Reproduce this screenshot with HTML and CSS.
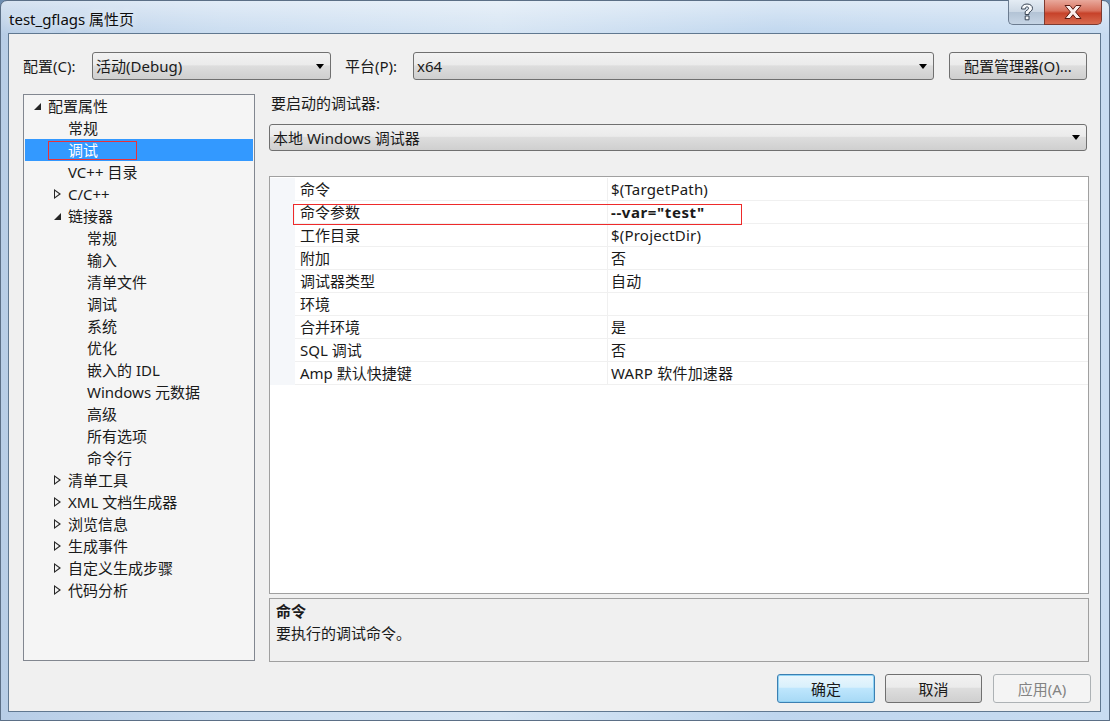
FILE: index.html
```html
<!DOCTYPE html>
<html lang="zh-CN">
<head>
<meta charset="utf-8">
<title>test_gflags 属性页</title>
<link rel="stylesheet" href="styles.css">
</head>
<body>
<div class="window">
	<div class="titlebar">
		<div class="title">test_gflags 属性页</div>
		<div class="caption">
			<div class="cap help">
				<svg width="14" height="18" viewBox="0 0 14 18"><path d="M1.5 6 C1.5 2.6 3.8 1 7 1 C10.4 1 12.5 2.8 12.5 5.3 C12.5 7.8 10.2 8.6 9 9.8 L9 11.5 L5.2 11.5 L5.2 8.8 C6 7.3 8.6 6.8 8.6 5.3 C8.6 4.4 8 3.9 7 3.9 C5.9 3.9 5.3 4.6 5.3 6 Z M5.2 13 L9 13 L9 16.8 L5.2 16.8 Z" fill="#f7f9fb" stroke="#3a4656" stroke-width="1"/></svg>
			</div>
			<div class="cap close">
				<svg width="22" height="16" viewBox="0 0 22 16"><path d="M3 1.5 L8 1.5 L11 5.3 L14 1.5 L19 1.5 L13.6 8 L19 14.5 L14 14.5 L11 10.7 L8 14.5 L3 14.5 L8.4 8 Z" fill="#fbeeec" stroke="#5a1a12" stroke-width="1"/></svg>
			</div>
		</div>
	</div>

	<div class="client">
		<div class="toprow">
			<label class="lbl lbl-config">配置(C):</label>
			<div class="combo combo-config"><span>活动(Debug)</span><i class="drop"></i></div>
			<label class="lbl lbl-platform">平台(P):</label>
			<div class="combo combo-platform"><span>x64</span><i class="drop"></i></div>
			<div class="btn btn-manager">配置管理器(O)...</div>
		</div>

		<div class="main">
			<div class="tree">
				<div class="node l0"><i class="exp"></i>配置属性</div>
				<div class="node l1"><i></i>常规</div>
				<div class="node l1 sel"><i></i>调试<span class="mark mark-tree"></span></div>
				<div class="node l1"><i></i>VC++ 目录</div>
				<div class="node l1"><i class="col"></i>C/C++</div>
				<div class="node l1"><i class="exp"></i>链接器</div>
				<div class="node l2"><i></i>常规</div>
				<div class="node l2"><i></i>输入</div>
				<div class="node l2"><i></i>清单文件</div>
				<div class="node l2"><i></i>调试</div>
				<div class="node l2"><i></i>系统</div>
				<div class="node l2"><i></i>优化</div>
				<div class="node l2"><i></i>嵌入的 IDL</div>
				<div class="node l2"><i></i>Windows 元数据</div>
				<div class="node l2"><i></i>高级</div>
				<div class="node l2"><i></i>所有选项</div>
				<div class="node l2"><i></i>命令行</div>
				<div class="node l1"><i class="col"></i>清单工具</div>
				<div class="node l1"><i class="col"></i>XML 文档生成器</div>
				<div class="node l1"><i class="col"></i>浏览信息</div>
				<div class="node l1"><i class="col"></i>生成事件</div>
				<div class="node l1"><i class="col"></i>自定义生成步骤</div>
				<div class="node l1"><i class="col"></i>代码分析</div>
			</div>

			<div class="panel">
				<div class="panel-label">要启动的调试器:</div>
				<div class="combo combo-debugger"><span>本地 Windows 调试器</span><i class="drop"></i></div>

				<div class="grid">
					<div class="row"><div class="gut"></div><div class="name">命令</div><div class="val">$(TargetPath)</div></div>
					<div class="row"><div class="gut"></div><div class="name">命令参数</div><div class="val bold">--var="test"</div></div>
					<div class="row"><div class="gut"></div><div class="name">工作目录</div><div class="val">$(ProjectDir)</div></div>
					<div class="row"><div class="gut"></div><div class="name">附加</div><div class="val">否</div></div>
					<div class="row"><div class="gut"></div><div class="name">调试器类型</div><div class="val">自动</div></div>
					<div class="row"><div class="gut"></div><div class="name">环境</div><div class="val"></div></div>
					<div class="row"><div class="gut"></div><div class="name">合并环境</div><div class="val">是</div></div>
					<div class="row"><div class="gut"></div><div class="name">SQL 调试</div><div class="val">否</div></div>
					<div class="row"><div class="gut"></div><div class="name">Amp 默认快捷键</div><div class="val">WARP 软件加速器</div></div>
					<div class="redbox"></div>
				</div>

				<div class="desc">
					<div class="desc-title">命令</div>
					<div class="desc-text">要执行的调试命令。</div>
				</div>
			</div>
		</div>

		<div class="footer">
			<div class="btn btn-default">确定</div>
			<div class="btn">取消</div>
			<div class="btn btn-disabled">应用(A)</div>
		</div>
	</div>
</div>
</body>
</html>
```

FILE: styles.css
```css
body {
	margin: 0;
	padding: 0;
	width: 1110px;
	height: 721px;
	overflow: hidden;
	font: normal 15px "Noto Sans", "Noto Sans CJK SC", sans-serif;
	color: #1a1a1a;
	background: #6d8db0;
}

.window {
	width: 1110px;
	height: 721px;
	box-sizing: border-box;
	border: 1px solid #5b6f86;
	border-radius: 7px 7px 0 0;
	background:
		linear-gradient(to bottom, rgba(255,255,255,.45) 0, rgba(255,255,255,0) 34px),
		linear-gradient(to right, #b7cde6 0, #c9dcf0 20%, #d5e4f3 45%, #bfd6ee 70%, #c8dcf1 100%);
	display: flex;
	flex-direction: column;
}

.titlebar {
	height: 32px;
	display: flex;
	align-items: flex-start;
}

.title {
	padding: 8px 0 0 8px;
	font-size: 15px;
	line-height: 20px;
	color: #0d0d0d;
	text-shadow: 0 0 8px rgba(255,255,255,.9);
}

.caption {
	margin-left: auto;
	margin-right: 7px;
	margin-top: -1px;
	display: flex;
}

.cap {
	height: 25px;
	display: flex;
	align-items: center;
	justify-content: center;
	box-sizing: border-box;
	border: 1px solid #6c7c90;
	border-top: none;
}

.help {
	width: 36px;
	border-radius: 0 0 0 5px;
	border-right: none;
	background: linear-gradient(to bottom, #e4ecf4 0, #cbd7e4 50%, #b3c3d5 51%, #c6d5e5 100%);
}

.close {
	width: 58px;
	border-radius: 0 0 5px 0;
	background: linear-gradient(to bottom, #e9a99c 0, #d7705c 45%, #c7422a 55%, #d86b4f 100%);
	border-color: #7d3a30;
}

.client {
	margin: 0 8px 8px 7px;
	flex: 1;
	background: #f0f0f0;
	border: 1px solid #607890;
	display: flex;
	flex-direction: column;
	padding: 18px 9px 0 14px;
}

.toprow {
	display: flex;
	align-items: center;
	height: 28px;
}

.lbl {
	line-height: 20px;
}

.lbl-config {
	width: 69px;
}

.lbl-platform {
	width: 68px;
	margin-left: 14px;
}

.combo {
	position: relative;
	box-sizing: border-box;
	height: 28px;
	border: 1px solid #707070;
	border-radius: 3px;
	background: linear-gradient(to bottom, #f2f2f2 0, #ebebeb 45%, #dddddd 50%, #cfcfcf 100%);
	display: flex;
	align-items: center;
	padding-left: 3px;
	line-height: 20px;
}

.combo-config {
	width: 239px;
}

.combo-platform {
	width: 521px;
}

.drop {
	position: absolute;
	right: 6px;
	top: 11px;
	width: 0;
	height: 0;
	border-left: 4px solid transparent;
	border-right: 4px solid transparent;
	border-top: 5px solid #000;
}

.btn {
	box-sizing: border-box;
	height: 29px;
	width: 97px;
	border: 1px solid #707070;
	border-radius: 3px;
	background: linear-gradient(to bottom, #f2f2f2 0, #ebebeb 45%, #dddddd 50%, #cfcfcf 100%);
	display: flex;
	align-items: center;
	justify-content: center;
	line-height: 20px;
}

.btn-manager {
	width: 138px;
	height: 28px;
	margin-left: 15px;
}

.main {
	display: flex;
	margin-top: 14px;
	gap: 14px;
}

.tree {
	width: 232px;
	height: 567px;
	box-sizing: border-box;
	border: 1px solid #828790;
	background: #f5f5f5;
	padding: 0 1px 0 1px;
	position: relative;
}

.node {
	height: 22px;
	line-height: 22px;
	display: flex;
	align-items: center;
	white-space: nowrap;
	position: relative;
}

.node i {
	width: 16px;
	height: 22px;
	flex: none;
	position: relative;
}

.l0 { padding-left: 7px; }
.l1 { padding-left: 27px; }
.l2 { padding-left: 46px; }

.node .exp::before {
	content: "";
	position: absolute;
	left: 2px;
	top: 8px;
	width: 0;
	height: 0;
	border-left: 7px solid transparent;
	border-bottom: 7px solid #262626;
}

.node .col::before {
	content: "";
	position: absolute;
	left: 2px;
	top: 6px;
	width: 0;
	height: 0;
	border-top: 5px solid transparent;
	border-bottom: 5px solid transparent;
	border-left: 7px solid #262626;
}

.node .col::after {
	content: "";
	position: absolute;
	left: 3px;
	top: 8px;
	width: 0;
	height: 0;
	border-top: 3px solid transparent;
	border-bottom: 3px solid transparent;
	border-left: 4px solid #f5f5f5;
}

.sel {
	background: #3399ff;
	color: #fff;
}

.mark {
	position: absolute;
	border: 1px solid #e8323a;
	pointer-events: none;
}

.mark-tree {
	left: 23px;
	top: 2px;
	width: 87px;
	height: 17px;
}

.panel {
	width: 820px;
	display: flex;
	flex-direction: column;
}

.panel-label {
	line-height: 18px;
	padding-left: 2px;
}

.combo-debugger {
	width: 818px;
	height: 27px;
	margin-top: 12px;
}

.combo-debugger .drop {
	top: 10px;
}

.grid {
	margin-top: 25px;
	height: 418px;
	box-sizing: border-box;
	border: 1px solid #a0a0a0;
	background: #fff;
	padding-top: 1px;
	position: relative;
}

.row {
	display: flex;
	height: 23px;
	box-sizing: border-box;
	border-bottom: 1px solid #f0f0f0;
	line-height: 22px;
}

.gut {
	width: 25px;
	flex: none;
	background: #f5f7fa;
	margin-bottom: -1px;
}

.name {
	width: 313px;
	flex: none;
	padding-left: 5px;
	box-sizing: border-box;
	border-right: 1px solid #f0f0f0;
}

.val {
	padding-left: 3px;
	flex: 1;
	letter-spacing: .2px;
}

.bold {
	font-weight: bold;
	letter-spacing: .6px;
}

.redbox {
	position: absolute;
	left: 23px;
	top: 27px;
	width: 447px;
	height: 19px;
	border: 1px solid #ee2a2a;
}

.desc {
	margin-top: 4px;
	height: 64px;
	box-sizing: border-box;
	border: 1px solid #a0a0a0;
	background: #f0f0f0;
	padding: 1px 0 0 6px;
}

.desc-title {
	font-weight: bold;
	line-height: 22px;
}

.desc-text {
	line-height: 22px;
}

.footer {
	display: flex;
	justify-content: flex-end;
	gap: 10px;
	margin-top: 12px;
}

.btn-default {
	width: 98px;
	border-color: #3c7fb1;
	background: linear-gradient(to bottom, #eaf6fd 0, #d9f0fc 45%, #bee6fd 50%, #a7d9f5 100%);
	box-shadow: inset 0 0 0 1px #8fd3f5;
}

.btn-disabled {
	width: 98px;
	margin-left: 1px;
	border-color: #adb2b5;
	background: #f4f4f4;
	color: #838383;
}
```
